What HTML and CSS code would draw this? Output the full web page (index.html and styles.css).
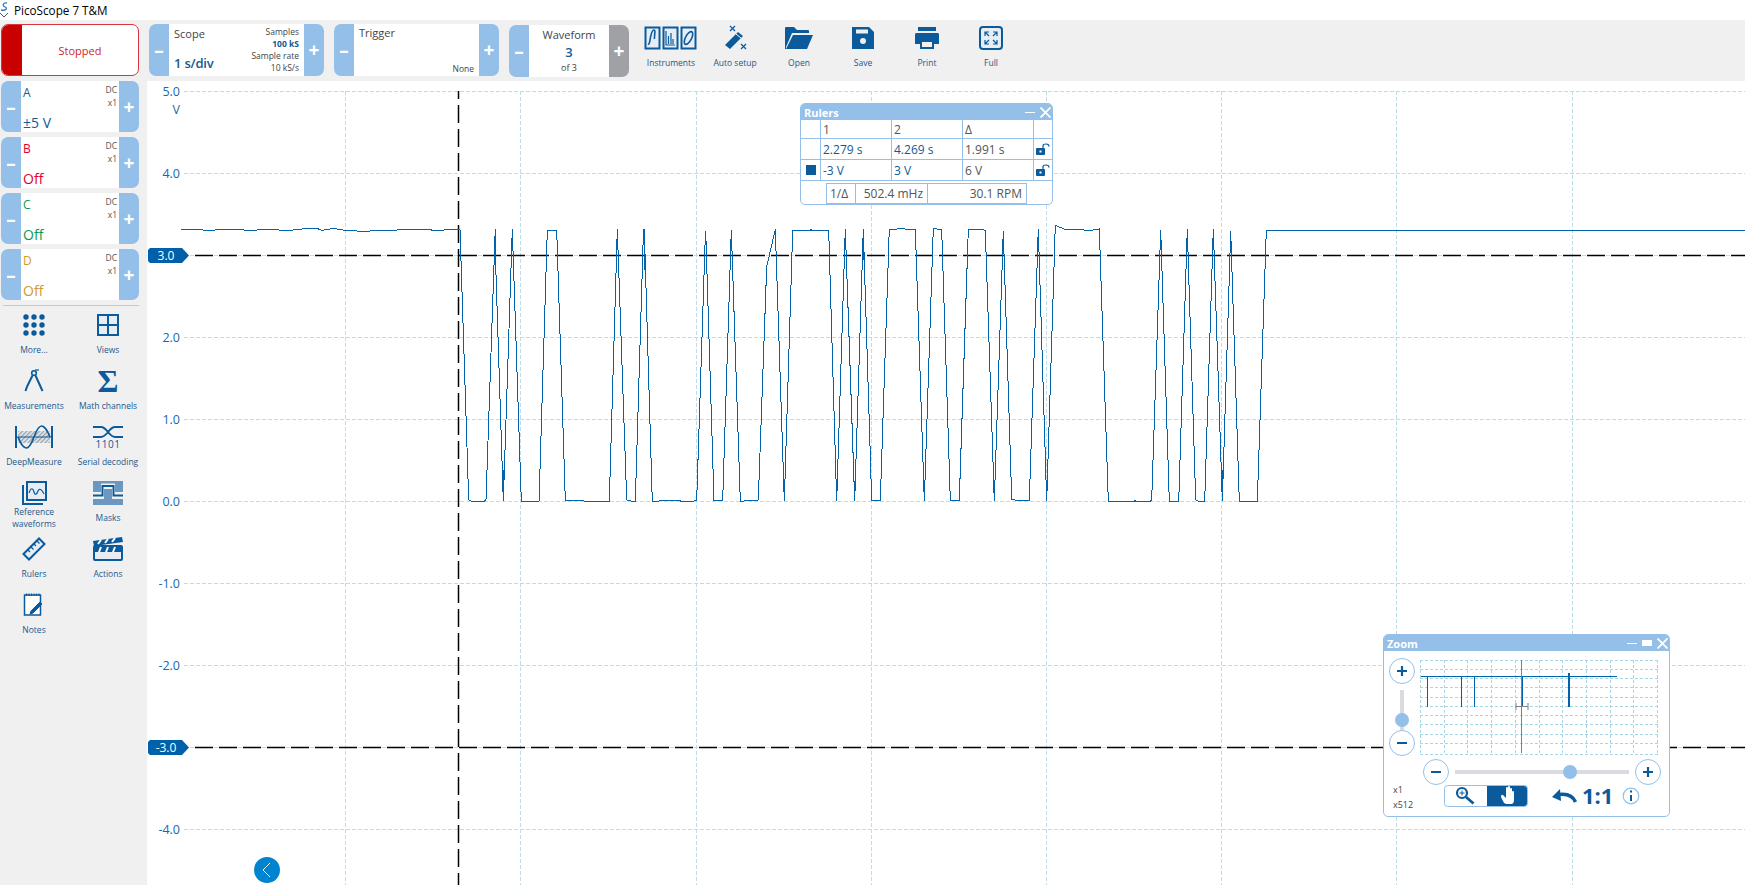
FILE: index.html
```html
<!DOCTYPE html>
<html lang="en">
<head>
  <meta charset="UTF-8" />
  <title>PicoScope 7 T&amp;M</title>
  <link rel="stylesheet" href="styles.css">
</head>
<body>
  <!-- title bar -->
  <div class="titlebar">
    <svg class="app-icon" viewBox="0 0 9 16"><path d="M7 1C3 0 2 4 5 5C8 6 6 9 1 8" fill="none" stroke="#2a7fc0" stroke-width="1.3"/><path d="M0 11l4 4l4-4" fill="none" stroke="#555" stroke-width="1"/></svg>
    <span>PicoScope 7 T&amp;M</span>
  </div>

  <!-- top toolbar -->
  <div class="toolbar">
    <div class="stopped"><div class="stopped-strip"></div><div class="stopped-text">Stopped</div></div>

    <div class="ctl ctl-scope">
      <div class="btn btn-l">–</div>
      <div class="ctl-body">
        <div class="ctl-left"><div class="ctl-name">Scope</div><div class="ctl-value">1 s/div</div></div>
        <div class="ctl-right"><div>Samples</div><div class="b">100 kS</div><div>Sample rate</div><div>10 kS/s</div></div>
      </div>
      <div class="btn btn-r">+</div>
    </div>

    <div class="ctl ctl-trigger">
      <div class="btn btn-l">–</div>
      <div class="ctl-body ctl-col">
        <div class="ctl-name">Trigger</div>
        <div class="ctl-none">None</div>
      </div>
      <div class="btn btn-r">+</div>
    </div>

    <div class="ctl ctl-wave">
      <div class="btn btn-l">–</div>
      <div class="ctl-body ctl-center">
        <div class="ctl-name">Waveform</div>
        <div class="wave-num">3</div>
        <div class="wave-of">of 3</div>
      </div>
      <div class="btn btn-r btn-off">+</div>
    </div>

    <div class="tools">
      <div class="tool">
        <svg width="54" height="24" viewBox="0 0 54 24" class="ico">
          <rect x="1.500" y="1.500" width="14" height="21" class="lt"/><rect x="19.500" y="1.500" width="14" height="21" class="lt"/><rect x="37.500" y="1.500" width="14" height="21" class="lt"/>
          <path d="M4 18C6 19 6 12 7 9C8 5 9 4 10 4C12 4 10 10 10.500 13" class="ln1b"/>
          <path d="M22 5V19H31M24.500 18V10M27 18V7M29 18V13" class="ln1"/>
          <ellipse cx="44.500" cy="12" rx="3" ry="7" transform="rotate(28 44.500 12)" class="ln1b"/>
        </svg>
        <div class="tool-label">Instruments</div>
      </div>
      <div class="tool">
        <svg width="24" height="24" viewBox="0 0 24 24" class="ico">
          <path d="M2 19L15 6L20 10L7 23Z" class="fl"/>
          <path d="M13 8L18 12" stroke="#fff" stroke-width="1"/>
          <path d="M7 0l5 5M12 0l-5 5M18 18l5 5M23 18l-5 5" class="ln1"/>
        </svg>
        <div class="tool-label">Auto setup</div>
      </div>
      <div class="tool">
        <svg width="28" height="24" viewBox="0 0 28 24" class="ico">
          <path d="M0 23V2Q0 1 1 1H9L12 4H23Q24 4 24 5V7H7L1 21V23Z" class="fl"/>
          <path d="M1 23L8 9H28L22 23Z" class="fl"/>
        </svg>
        <div class="tool-label">Open</div>
      </div>
      <div class="tool">
        <svg width="24" height="24" viewBox="0 0 24 24" class="ico">
          <path d="M1 1H18L23 6V23H1Z" class="fl"/>
          <rect x="5" y="3.500" width="12" height="4" fill="#f0f0f0"/>
          <circle cx="12" cy="15" r="3" fill="#f0f0f0"/>
        </svg>
        <div class="tool-label">Save</div>
      </div>
      <div class="tool">
        <svg width="26" height="24" viewBox="0 0 26 24" class="ico">
          <rect x="4" y="1" width="18" height="4" class="fl"/>
          <path d="M2 7H24Q25 7 25 9V18H20V14H6V18H1V9Q1 7 2 7Z" class="fl"/>
          <rect x="7" y="15" width="12" height="7" fill="#f0f0f0" stroke="#0a5a9c" stroke-width="2"/>
        </svg>
        <div class="tool-label">Print</div>
      </div>
      <div class="tool">
        <svg width="24" height="24" viewBox="0 0 24 24" class="ico">
          <rect x="1" y="1" width="22" height="22" rx="3" class="lt"/>
          <path d="M6 10V6H10M18 10V6H14M6 14V18H10M18 14V18H14M6 6L10 10M18 6L14 10M6 18L10 14M18 18L14 14" class="ln1"/>
        </svg>
        <div class="tool-label">Full</div>
      </div>
    </div>
  </div>

  <div class="main">
    <!-- channels and side buttons -->
    <div class="sidebar">
      <div class="channel">
        <div class="btn btn-l">–</div>
        <div class="ch-body"><div class="ch-top"><span class="ch-name cA">A</span><span class="ch-dc">DC<br>x1</span></div><div class="ch-range cA">±5 V</div></div>
        <div class="btn btn-r">+</div>
      </div>
      <div class="channel">
        <div class="btn btn-l">–</div>
        <div class="ch-body"><div class="ch-top"><span class="ch-name cB">B</span><span class="ch-dc">DC<br>x1</span></div><div class="ch-range cB">Off</div></div>
        <div class="btn btn-r">+</div>
      </div>
      <div class="channel">
        <div class="btn btn-l">–</div>
        <div class="ch-body"><div class="ch-top"><span class="ch-name cC">C</span><span class="ch-dc">DC<br>x1</span></div><div class="ch-range cC">Off</div></div>
        <div class="btn btn-r">+</div>
      </div>
      <div class="channel">
        <div class="btn btn-l">–</div>
        <div class="ch-body"><div class="ch-top"><span class="ch-name cD">D</span><span class="ch-dc">DC<br>x1</span></div><div class="ch-range cD">Off</div></div>
        <div class="btn btn-r">+</div>
      </div>

      <div class="sep"></div>

      <div class="side-grid">
        <div class="side-item">
          <svg width="24" height="24" viewBox="0 0 24 24" class="ico">
            <g class="fl"><circle cx="4" cy="4" r="2.700"/><circle cx="12" cy="4" r="2.700"/><circle cx="20" cy="4" r="2.700"/><circle cx="4" cy="12" r="2.700"/><circle cx="12" cy="12" r="2.700"/><circle cx="20" cy="12" r="2.700"/><circle cx="4" cy="20" r="2.700"/><circle cx="12" cy="20" r="2.700"/><circle cx="20" cy="20" r="2.700"/></g>
          </svg>
          <div class="side-label">More...</div>
        </div>
        <div class="side-item">
          <svg width="24" height="24" viewBox="0 0 24 24" class="ico">
            <rect x="2" y="2" width="20" height="20" class="lt"/><path d="M12 2V22M2 12H22" class="ln"/>
          </svg>
          <div class="side-label">Views</div>
        </div>
        <div class="side-item">
          <svg width="20" height="24" viewBox="0 0 20 24" class="ico">
            <circle cx="10" cy="4" r="2.300" class="ln1b"/><path d="M8.500 6.500C6 12 3 16 1.500 22" class="ln"/><path d="M11.500 6.500L18.500 22" class="ln"/><path d="M11 1H15" class="ln1"/>
          </svg>
          <div class="side-label">Measurements</div>
        </div>
        <div class="side-item">
          <div class="sigma">Σ</div>
          <div class="side-label">Math channels</div>
        </div>
        <div class="side-item">
          <svg width="38" height="24" viewBox="0 0 38 24" class="ico">
            <defs><pattern id="hatch" width="3" height="3" patternUnits="userSpaceOnUse" patternTransform="rotate(45)"><rect width="1.500" height="3" fill="#9aa4ae"/></pattern></defs>
            <path d="M3 6H35V18H3Z" fill="url(#hatch)"/>
            <path d="M1 12H37" class="ln1"/>
            <path d="M3 12C6 19 8 23 11.500 23C15 23 17 17 19 12C21 7 23 1 26.500 1C30 1 32 5 35 12" class="ln1b"/>
            <path d="M1 1V23M37 1V23" class="ln"/>
          </svg>
          <div class="side-label">DeepMeasure</div>
        </div>
        <div class="side-item">
          <div class="serial-ico">
            <svg width="30" height="14" viewBox="0 0 30 14" class="ico"><path d="M0 2H8C14 2 16 12 22 12H30M0 12H8C14 12 16 2 22 2H30" class="ln"/></svg>
            <div class="serial-bits">1101</div>
          </div>
          <div class="side-label">Serial decoding</div>
        </div>
        <div class="side-item">
          <svg width="26" height="24" viewBox="0 0 26 24" class="ico">
            <path d="M2 4V23H22" class="ln"/>
            <rect x="6" y="1" width="19" height="18" class="lt"/>
            <path d="M8 12C10 6 12 7 13 11C14 15 16 13 17 10C18 7 21 8 23 13" class="ln1"/>
          </svg>
          <div class="side-label">Reference waveforms</div>
        </div>
        <div class="side-item">
          <svg width="30" height="24" viewBox="0 0 30 24" class="ico">
            <path d="M0 0H30V11H22V2.500H8V11H0Z" fill="#6c98c0"/>
            <rect x="0" y="18" width="30" height="6" fill="#6c98c0"/>
            <rect x="11" y="8" width="8" height="10" fill="#6c98c0"/>
            <path d="M0 14.500H9.500V5H20.500V14.500H30" class="ln"/>
          </svg>
          <div class="side-label">Masks</div>
        </div>
        <div class="side-item">
          <svg width="24" height="24" viewBox="0 0 24 24" class="ico">
            <path d="M1.500 17L17 1.500L22.500 7L7 22.500Z" class="lt"/>
            <path d="M6 13L8 15M9 10L11.500 12.500M12 7L14 9M15 4L17.500 6.500" class="ln1"/>
          </svg>
          <div class="side-label">Rulers</div>
        </div>
        <div class="side-item">
          <svg width="30" height="24" viewBox="0 0 30 24" class="ico">
            <path d="M0 4L29 0L30 5L1 9Z" class="fl"/>
            <path d="M5 7L8 3M12 6L15 2M19 5L22 1" stroke="#fff" stroke-width="2"/>
            <rect x="1" y="9" width="28" height="14" rx="1" class="lt"/>
            <rect x="1" y="9" width="28" height="6" class="fl"/>
            <path d="M6 15L8 10M13 15L15 10M20 15L22 10" stroke="#fff" stroke-width="2"/>
          </svg>
          <div class="side-label">Actions</div>
        </div>
        <div class="side-item">
          <svg width="22" height="24" viewBox="0 0 22 24" class="ico">
            <rect x="1.500" y="2" width="16" height="20" class="lt2"/>
            <path d="M3.500 0.500V3M6 0.500V3M8.500 0.500V3M11 0.500V3M13.500 0.500V3M16 0.500V3" class="ln1"/>
            <path d="M7 21L8 18L17 9L19 11L10 20Z" class="fl" stroke="#0a5a9c" stroke-width="1"/>
          </svg>
          <div class="side-label">Notes</div>
        </div>
      </div>
    </div>

    <!-- scope view -->
    <div class="plot">
      <svg class="plot-svg" viewBox="147 81 1598 804" width="1598" height="804">
        <g class="grid">
          <path d="M184 91.500H1745M184 173.500H1745M184 255.500H1745M184 337.500H1745M184 419.500H1745M184 501.500H1745M184 583.500H1745M184 665.500H1745M184 747.500H1745M184 829.500H1745"/>
          <path d="M345.500 91V885M520.500 91V885M696.500 91V885M871.500 91V885M1046.500 91V885M1221.500 91V885M1396.500 91V885M1572.500 91V885"/>
        </g>
        <g class="rulers">
          <path d="M195 255.500H1745M195 747.500H1745"/>
          <path class="ruler-v" d="M458.500 91V885"/>
        </g>
        <polyline class="trace" points="181,229.400 200,229.400 205,230.400 231,229.400 253,230.400 262,229.400 290,230.400 304,228.800 318,228.800 322,230.400 334,228.400 345,230.400 365,231.400 378,230.400 426,229.400 435,230.400 460,229.300 468.700,500 472,501.300 484,501.300 486,499.500 495,236 495.700,229.300 496,275 503.300,501.300 504,470 503.300,501.300 512.300,229.300 513,240 512.300,229.300 521.300,501.300 539,501.300 547.300,230 556.700,230 565.300,500 583.300,500 584,501.300 609.300,501.300 617.300,229.300 618,250 617.300,229.300 626.700,500 632,501.300 635.300,501.300 643.500,229.300 644.300,229.300 645,270 644.300,229.300 652.300,501.300 659,501.300 660,500.300 680,500.300 681,501.300 693,501.300 696.700,500 705,245 705.700,231 714,500 722.700,500 731.300,230 732,240 731.300,230 740.300,501.300 758.300,500 766.700,266.700 775.300,229.300 784.300,501.300 792.700,230.300 810,230.300 811,229.500 812,230.300 828.700,230.300 836.700,501.300 837,480 836.700,501.300 845.300,229 846,245 845.300,229 854.700,501.300 863.300,229.300 863.800,260 863.300,229.300 871.700,500.300 880.300,500.300 889.300,229 897,229 900,228.300 905,229 915.300,229 924.300,501.300 924.800,480 924.300,501.300 933.300,228.300 936,228.300 938,229.500 941.700,230 950.300,500 959.300,500 968.300,230 972.700,229 980,229 985.300,230.300 994.300,501.300 994.800,480 994.300,501.300 1003.300,231 1002.800,260 1003.300,231 1011.700,499.300 1020,501 1029.300,500.300 1038.300,229 1037.500,260 1038.300,229 1046.700,501.300 1047.500,460 1046.700,501.300 1055.300,225.300 1064,229 1083.300,229 1084,230 1093,230 1099.300,229 1108.300,501.300 1134,501.300 1135,500.500 1136,501.300 1150,501.300 1151.700,500 1160.700,230 1161.500,260 1160.700,230 1169.300,501 1178.700,502 1187.300,229 1186.500,260 1187.300,229 1195.700,500 1198,501 1204.700,501 1213.300,229 1222.300,501.300 1223,470 1222.300,501.300 1230.700,231 1231.500,260 1230.700,231 1239.300,501.300 1257.300,501.300 1266.300,230.600 1745,230.600"/>
        <text class="axis" x="180" y="96">5.0</text>
        <text class="axis" x="180" y="178">4.0</text>
        <text class="axis" x="180" y="342">2.0</text>
        <text class="axis" x="180" y="424">1.0</text>
        <text class="axis" x="180" y="506">0.0</text>
        <text class="axis" x="180" y="588">-1.0</text>
        <text class="axis" x="180" y="670">-2.0</text>
        <text class="axis" x="180" y="834">-4.0</text>
        <text class="axis" x="180" y="114">V</text>
        <path class="tag" d="M150 248H182L189 255.500L182 263H150L148 261V250Z"/>
        <text class="tag-text" x="166" y="260">3.0</text>
        <path class="tag" d="M150 740H182L189 747.500L182 755H150L148 753V742Z"/>
        <text class="tag-text" x="166" y="752">-3.0</text>
      </svg>

      <!-- collapse button -->
      <div class="collapse">
        <svg width="26" height="26" viewBox="0 0 26 26"><path d="M16 6L9 13L16 20" fill="none" stroke="#fff" stroke-width="1"/></svg>
      </div>

      <!-- rulers window -->
      <div class="win rulers-win">
        <div class="win-title"><span>Rulers</span><span class="win-btns"><i class="w-min"></i><svg width="11" height="11" viewBox="0 0 11 11"><path d="M0.500 0.500L10.500 10.500M10.500 0.500L0.500 10.500" stroke="#fff" stroke-width="1.800"/></svg></span></div>
        <div class="rt-row rt-h1">
          <div class="rc rc0"></div><div class="rc rc1 dark">1</div><div class="rc rc1 dark">2</div><div class="rc rc1 dark">Δ</div><div class="rc rc4"></div>
        </div>
        <div class="rt-row rt-h2">
          <div class="rc rc0"></div><div class="rc rc1 blue">2.279 s</div><div class="rc rc1 blue">4.269 s</div><div class="rc rc1 dark">1.991 s</div>
          <div class="rc rc4"><svg width="14" height="12" viewBox="0 0 14 12"><rect x="0" y="5" width="9" height="7" rx="1" fill="#0a5a9c"/><path d="M7 5V3Q7 1 10 1Q13 1 13 3.500" fill="none" stroke="#0a5a9c" stroke-width="1.200"/><rect x="3.500" y="7.500" width="2" height="2" fill="#fff"/></svg></div>
        </div>
        <div class="rt-row rt-h2">
          <div class="rc rc0"><i class="sq"></i></div><div class="rc rc1 blue">-3 V</div><div class="rc rc1 blue">3 V</div><div class="rc rc1 dark">6 V</div>
          <div class="rc rc4"><svg width="14" height="12" viewBox="0 0 14 12"><rect x="0" y="5" width="9" height="7" rx="1" fill="#0a5a9c"/><path d="M7 5V3Q7 1 10 1Q13 1 13 3.500" fill="none" stroke="#0a5a9c" stroke-width="1.200"/><rect x="3.500" y="7.500" width="2" height="2" fill="#fff"/></svg></div>
        </div>
        <div class="rt-foot">
          <div class="rf rf0 dark">1/Δ</div><div class="rf rf1 dark">502.4 mHz</div><div class="rf rf2 dark">30.1 RPM</div>
        </div>
      </div>

      <!-- zoom window -->
      <div class="win zoom-win">
        <div class="win-title"><span>Zoom</span><span class="win-btns"><i class="w-min"></i><i class="w-max"></i><svg width="11" height="11" viewBox="0 0 11 11"><path d="M0.500 0.500L10.500 10.500M10.500 0.500L0.500 10.500" stroke="#fff" stroke-width="1.800"/></svg></span></div>
        <svg class="zoom-svg" width="285" height="165" viewBox="1384 652 285 165">
          <g class="mini-grid">
            <path d="M1420.500 661V755M1444.500 661V755M1467.500 661V755M1491.500 661V755M1515.500 661V755M1539.500 661V755M1562.500 661V755M1586.500 661V755M1610.500 661V755M1633.500 661V755M1657.500 661V755"/>
            <path d="M1420 661.500H1658M1420 670.500H1658M1420 679.500H1658M1420 688.500H1658M1420 698.500H1658M1420 707.500H1658M1420 716.500H1658M1420 725.500H1658M1420 735.500H1658M1420 744.500H1658M1420 755.500H1658"/>
          </g>
          <path class="mini-trace" d="M1421 677.500H1617M1427.500 677V708M1461.500 677V708M1474.500 677V708M1522.500 677V708"/>
          <path class="mini-thick" d="M1569 674V708"/>
          <path d="M1521.500 661V754" stroke="#808080" stroke-width="1" fill="none"/>
          <path d="M1516 707.500H1528M1516 704V711M1528 704V711" stroke="#808080" stroke-width="1" fill="none"/>

          <circle class="zb" cx="1402" cy="672" r="12.500"/><path class="zp" d="M1397 672H1407M1402 667V677"/>
          <rect x="1400" y="691" width="4" height="40" fill="#d9dbe0"/>
          <circle cx="1402" cy="721" r="7" fill="#93bfe9"/>
          <circle class="zb" cx="1402" cy="744" r="12.500"/><path class="zp" d="M1397 744H1407"/>

          <circle class="zb" cx="1436" cy="773" r="12.500"/><path class="zp" d="M1431 773H1441"/>
          <rect x="1455" y="771" width="174" height="4" fill="#d9dbe0"/>
          <circle cx="1570" cy="773" r="7" fill="#93bfe9"/>
          <circle class="zb" cx="1648" cy="773" r="12.500"/><path class="zp" d="M1643 773H1653M1648 768V778"/>

          <text class="zx" x="1393" y="794">x1</text>
          <text class="zx" x="1393" y="809">x512</text>

          <rect x="1444.500" y="786.500" width="83" height="21" rx="3" fill="#fff" stroke="#93bfe9"/>
          <path d="M1487 787H1524Q1527 787 1527 790V804Q1527 807 1524 807H1487Z" fill="#0a5a9c"/>
          <circle cx="1462" cy="794" r="5" fill="none" stroke="#0a5a9c" stroke-width="2.200"/>
          <path d="M1466 798L1473.500 804.500" stroke="#0a5a9c" stroke-width="2.800"/>
          <path d="M1459.500 794H1464.500M1462 791.500V796.500" stroke="#0a5a9c" stroke-width="1"/>
          <path d="M1501 798L1503 802Q1504 805 1507 805H1511Q1514 805 1514 801V793Q1514 792 1513 792Q1512 792 1512 793V797V790Q1512 789 1511 789Q1510 789 1510 790V796V788Q1510 787 1509 787Q1508 787 1508 788V796V789Q1508 788 1507 788Q1506 788 1506 789V799L1503 796Q1501 795 1501 798Z" fill="#fff"/>

          <path d="M1575.500 803C1573 797 1567 794.500 1559 795.500" fill="none" stroke="#0a5a9c" stroke-width="3.500"/>
          <path d="M1552 798L1560 790L1561 802Z" fill="#0a5a9c"/>
          <text class="zone" x="1582" y="805">1:1</text>
          <circle cx="1631" cy="797" r="7.800" fill="#fff" stroke="#93bfe9" stroke-width="1.200"/>
          <path d="M1631 796V802M1631 791.500V793.500" stroke="#0a5a9c" stroke-width="2"/>
        </svg>
      </div>
    </div>
  </div>
</body>
</html>
```

FILE: styles.css
```css
html, body { margin:0; padding:0; width:100%; height:100%; overflow:hidden; background:#fff; font-family:"Open Sans","Liberation Sans",sans-serif; color:#444; }
body { display:flex; flex-direction:column; }

/* title bar */
.titlebar { height:20px; display:flex; align-items:center; background:#fff; font-size:11.7px; color:#000; flex:none; }
.app-icon { width:9px; height:16px; margin-right:5px; }

/* top toolbar */
.toolbar { height:61px; flex:none; background:#f0f0f0; display:flex; align-items:flex-start; padding:4px 0 0 1px; box-sizing:border-box; gap:10px; }
.stopped { width:138px; height:52px; box-sizing:border-box; border:1px solid #d8343f; border-radius:7px; display:flex; overflow:hidden; background:#fff; }
.stopped-strip { width:20px; background:#c90000; }
.stopped-text { flex:1; text-align:center; line-height:51px; color:#cf1f1f; font-size:11px; }

.ctl { height:52px; display:flex; background:#fff; border-radius:7px; overflow:hidden; }
.ctl-scope { width:175px; }
.ctl-trigger { width:165px; }
.ctl-wave { width:120px; margin-top:1px; }
.btn { width:20px; flex:none; background:#93bfe9; color:#fff; font-size:19px; font-weight:700; display:flex; align-items:center; justify-content:center; }
.btn-off { background:#a0a1a5; }
.ctl-body { flex:1; display:flex; justify-content:space-between; padding:0 5px; min-width:0; }
.ctl-left { display:flex; flex-direction:column; justify-content:space-between; padding:2px 0 4px; }
.ctl-name { font-size:11px; color:#444; line-height:16px; }
.ctl-value { font-size:13px; font-weight:600; color:#135a94; line-height:18px; letter-spacing:-0.2px; }
.ctl-right { text-align:right; font-size:8.5px; line-height:12px; padding-top:2px; color:#444; }
.ctl-right .b { font-weight:700; color:#135a94; }
.ctl-col { flex-direction:column; padding-left:5px; padding-top:1px; padding-bottom:1px; }
.ctl-col .ctl-name { padding-left:0; }
.ctl-none { font-size:8.5px; text-align:right; line-height:12px; }
.ctl-center { flex-direction:column; align-items:center; padding:0; justify-content:center; }
.wave-num { font-size:13px; font-weight:600; color:#135a94; line-height:18px; }
.wave-of { font-size:9px; line-height:14px; }

.tools { display:flex; }
.tool { width:64px; display:flex; flex-direction:column; align-items:center; height:52px; padding-top:2px; box-sizing:border-box; }
.tool svg { height:24px; flex:none; }
.tool-label { margin-top:7px; font-size:8.5px; line-height:12px; color:#23588c; white-space:nowrap; }

/* shared icon pieces */
.ico { overflow:visible; }
.fl { fill:#0a5a9c; }
.lt { fill:#e6edf4; stroke:#0a5a9c; stroke-width:2; }
.lt2 { fill:#fff; stroke:#0a5a9c; stroke-width:1.500; }
.ln { fill:none; stroke:#0a5a9c; stroke-width:2; }
.ln1 { fill:none; stroke:#0a5a9c; stroke-width:1.200; }
.ln1b { fill:none; stroke:#0a5a9c; stroke-width:1.600; }

/* sidebar */
.main { flex:1; display:flex; min-height:0; }
.sidebar { width:147px; flex:none; background:#f0f0f0; box-sizing:border-box; padding-left:1px; }
.channel { width:138px; height:51px; display:flex; background:#fff; border-radius:7px; overflow:hidden; margin-bottom:5px; }
.ch-body { flex:1; display:flex; flex-direction:column; justify-content:space-between; padding:2px 2px 0 2px; min-width:0; }
.ch-top { display:flex; justify-content:space-between; }
.ch-name { font-size:12px; line-height:20px; }
.ch-dc { font-size:8.5px; line-height:13px; text-align:right; color:#555; }
.ch-range { font-size:14px; line-height:18px; }
.cA { color:#135a94; }
.cB { color:#e3002d; }
.cC { color:#0a9a50; }
.cD { color:#d09a30; }
.sep { width:136px; margin:0 0 0 2px; height:1px; background:#c8c8c8; }

.side-grid { display:grid; grid-template-columns:74px 74px; row-gap:7px; padding-top:7px; margin-left:-4px; }
.side-item { display:flex; flex-direction:column; align-items:center; }
.side-item > svg { height:24px; flex:none; margin-bottom:1px; }
.side-label { height:24px; display:flex; align-items:center; text-align:center; font-size:8.5px; line-height:12px; color:#23588c; white-space:nowrap; }
.side-item:nth-child(7) .side-label { white-space:normal; width:50px; justify-content:center; }
.sigma { height:25px; font-family:"Liberation Serif",serif; font-weight:700; font-size:32px; line-height:25px; color:#0a5a9c; }
.serial-ico { height:25px; display:flex; flex-direction:column; align-items:center; }
.serial-ico svg { height:14px; flex:none; }
.serial-bits { font-size:10px; line-height:10px; color:#0a5a9c; letter-spacing:0.5px; }

/* plot */
.plot { flex:1; position:relative; background:#fff; overflow:hidden; }
.plot-svg { display:block; }
.grid path { fill:none; stroke:#bfdde8; stroke-width:1; stroke-dasharray:4 2; shape-rendering:crispEdges; }
.rulers path { fill:none; stroke:#000; stroke-width:1.500; stroke-dasharray:18 6; }
.rulers .ruler-v { stroke-dashoffset:10; }
.trace { fill:none; stroke:#0063ac; stroke-width:1; shape-rendering:crispEdges; }
.axis { font-size:12.5px; fill:#1a66b0; text-anchor:end; }
.tag { fill:#0060a9; }
.tag-text { font-size:12px; fill:#fff; text-anchor:middle; }

.collapse { position:absolute; left:107px; top:776px; width:26px; height:26px; border-radius:50%; background:#0084cf; }

/* floating windows */
.win { position:absolute; background:#fff; border:1px solid #93bfe9; border-radius:5px; box-sizing:border-box; overflow:hidden; }
.win-title { height:16px; background:#93bfe9; color:#fff; font-size:11px; font-weight:700; display:flex; justify-content:space-between; align-items:center; padding:0 1px 0 3px; }
.win-btns { display:flex; align-items:center; gap:5px; }
.w-min { display:block; width:10px; height:1px; background:#fff; }
.w-max { display:block; width:10px; height:6px; background:#fff; }

.rulers-win { left:653px; top:22px; width:253px; height:102px; }
.rt-row { display:flex; border-bottom:1px solid #93bfe9; }
.rt-h1 { height:18px; }
.rt-h2 { height:20px; }
.rc { box-sizing:border-box; border-right:1px solid #93bfe9; font-size:12px; padding-left:2px; display:flex; align-items:center; }
.rc0 { width:20px; padding:0; justify-content:center; }
.rc1 { width:71px; }
.rc4 { flex:1; border-right:none; padding:0; justify-content:center; }
.dark { color:#555; }
.blue { color:#135a94; }
.sq { display:block; width:10px; height:10px; background:#0a5a9c; }
.rt-foot { margin-left:25px; margin-top:2px; width:201px; height:21px; display:flex; border:1px solid #93bfe9; box-sizing:border-box; }
.rf { font-size:12px; line-height:19px; box-sizing:border-box; border-right:1px solid #93bfe9; white-space:nowrap; }
.rf0 { width:29px; padding-left:3px; }
.rf1 { width:72px; text-align:right; padding-right:4px; }
.rf2 { flex:1; text-align:right; padding-right:4px; border-right:none; }

.zoom-win { left:1236px; top:553px; width:287px; height:183px; }
.zoom-svg { display:block; }
.mini-grid path { fill:none; stroke:#a9d6e5; stroke-width:1; stroke-dasharray:3 2; shape-rendering:crispEdges; }
.mini-trace { fill:none; stroke:#0063ac; stroke-width:1; shape-rendering:crispEdges; }
.mini-thick { fill:none; stroke:#0063ac; stroke-width:2; shape-rendering:crispEdges; }
.zb { fill:#fff; stroke:#93bfe9; stroke-width:1; }
.zp { fill:none; stroke:#0a5a9c; stroke-width:2.200; }
.zx { font-size:9px; fill:#444; }
.zone { font-size:22px; font-weight:700; fill:#0a5a9c; }
```
